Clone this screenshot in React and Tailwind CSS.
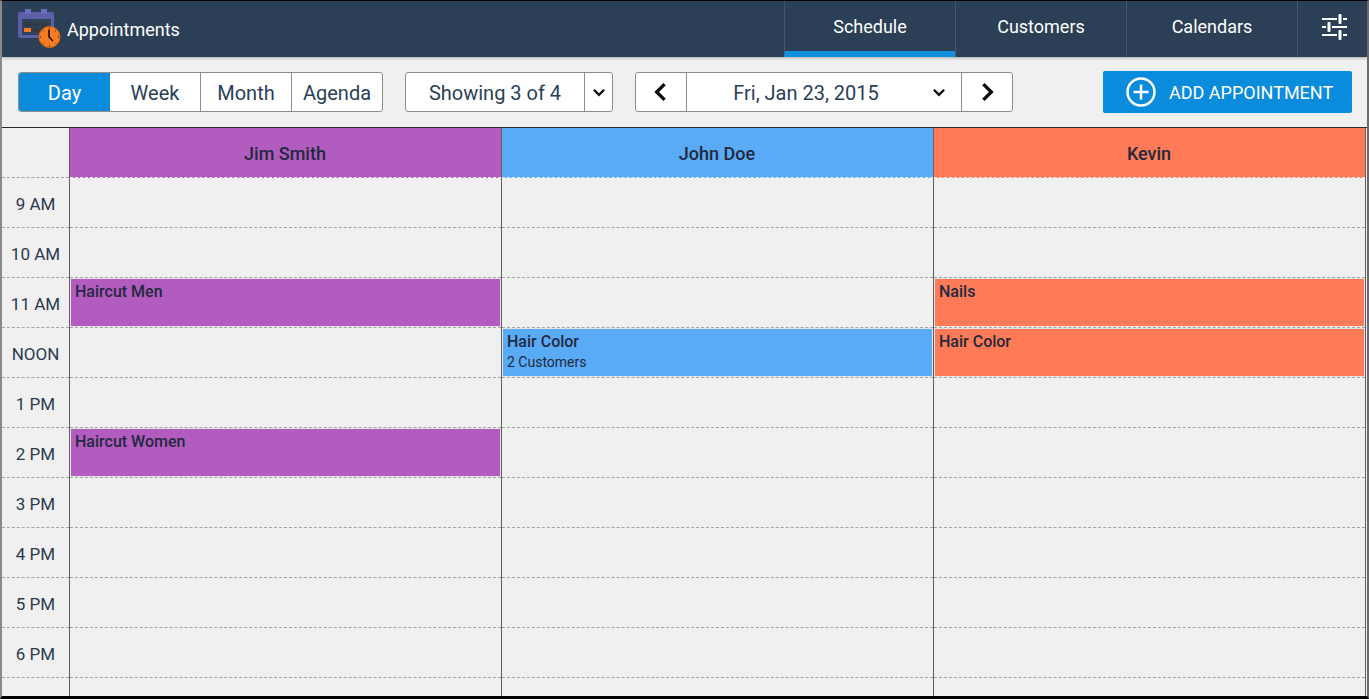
import React from 'react';

const hours = ['9 AM', '10 AM', '11 AM', 'NOON', '1 PM', '2 PM', '3 PM', '4 PM', '5 PM', '6 PM'];

const columns = [
  {
    name: 'Jim Smith',
    head: 'bg-[#b25cc0]',
    events: { '11 AM': { title: 'Haircut Men' }, '2 PM': { title: 'Haircut Women' } },
  },
  {
    name: 'John Doe',
    head: 'bg-[#5aabf6]',
    events: { NOON: { title: 'Hair Color', sub: '2 Customers' } },
  },
  {
    name: 'Kevin',
    head: 'bg-[#ff7b57]',
    events: { '11 AM': { title: 'Nails' }, NOON: { title: 'Hair Color' } },
  },
];

const Chevron = ({ dir = 'down', size = 16, width = 2 }) => {
  const d = { down: 'M2.500 5l4.500 4.500L11.500 5', left: 'M9.500 1.500L4 7l5.500 5.500', right: 'M4.500 1.500L10 7l-5.500 5.500' }[dir];
  return (
    <svg width={size} height={size} viewBox="0 0 14 14" fill="none" stroke="#0b0f14" strokeWidth={width}>
      <path d={d} />
    </svg>
  );
};

const Logo = () => (
  <svg width="46" height="40" viewBox="0 0 46 40">
    <rect x="1" y="3" width="36" height="26" rx="2" fill="#5a5fa8" />
    <rect x="8" y="0" width="6" height="5" fill="#6a70bd" />
    <rect x="24" y="0" width="6" height="5" fill="#6a70bd" />
    <rect x="5" y="10" width="29" height="16" fill="#2f4257" />
    <rect x="7" y="13" width="7" height="4" fill="#34383d" />
    <rect x="16" y="13" width="6" height="4" fill="#34383d" />
    <rect x="24" y="13" width="6" height="4" fill="#34383d" />
    <rect x="7" y="19" width="7" height="4" fill="#f57c20" />
    <rect x="16" y="19" width="6" height="4" fill="#34383d" />
    <rect x="24" y="19" width="6" height="4" fill="#34383d" />
    <circle cx="32.500" cy="28" r="10.500" fill="#f57c20" stroke="#d96a14" />
    <path d="M32 20.500v7.500l4 4" fill="none" stroke="#111" strokeWidth="1.600" />
    <path d="M32.500 18.500v1M32.500 36.500v1M23 28h1M41 28h1M26 21.500l.7.7M39 21.500l-.7.7M26 34.500l.7-.7M39 34.500l-.7-.7" stroke="#111" strokeWidth="1" />
  </svg>
);

const SlidersIcon = () => (
  <svg width="28" height="28" viewBox="0 0 28 28" fill="#fff">
    <rect x="2" y="5" width="25" height="2" />
    <rect x="2" y="13" width="25" height="2" />
    <rect x="2" y="21" width="25" height="2" />
    <rect x="17" y="1" width="6" height="10" rx="1.500" fill="#2b3f56" />
    <rect x="18.500" y="1" width="3" height="10" rx="1" />
    <rect x="6" y="9" width="6" height="10" rx="1.500" fill="#2b3f56" />
    <rect x="7.500" y="9" width="3" height="10" rx="1" />
    <rect x="17" y="17" width="6" height="10" rx="1.500" fill="#2b3f56" />
    <rect x="18.500" y="17" width="3" height="10" rx="1" />
  </svg>
);

const NavTab = ({ label, active, w }) => (
  <div className={`${w} h-full flex items-center justify-center border-l border-[#44586d] text-[18px] text-white ${active ? 'border-b-[6px] border-b-[#1191e0] pt-[1px]' : 'pb-[5px]'}`}>
    {label}
  </div>
);

const Cell = ({ event, color }) => (
  <div className="h-[50px] border-b border-dashed border-[#a3a3a3]">
    {event && (
      <div className={`h-full px-1 pt-[3px] border border-[#e4e4e4] text-[#22293d] ${color}`}>
        <div className="text-[16px] leading-[20px] font-medium">{event.title}</div>
        {event.sub && <div className="text-[14px] leading-[20px]">{event.sub}</div>}
      </div>
    )}
  </div>
);

export default function App() {
  return (
    <div className="w-[1369px] h-[699px] overflow-hidden flex flex-col bg-[#f0f0f0] border-t border-t-black border-l-2 border-l-[#8a8a8a] border-r-2 border-r-[#6a6a6a] border-b-[3px] border-b-black font-['Roboto',sans-serif]">
      {/* Nav */}
      <div className="h-[56px] shrink-0 flex items-center bg-[#2b3f56] shadow-[0_1px_3px_rgba(0,0,0,0.3)]">
        <div className="pl-[15px] flex items-center flex-1">
          <Logo />
          <span className="ml-[4px] text-[18px] text-white">Appointments</span>
        </div>
        <NavTab label="Schedule" active w="w-[171px]" />
        <NavTab label="Customers" w="w-[171px]" />
        <NavTab label="Calendars" w="w-[171px]" />
        <div className="w-[70px] h-full flex items-center justify-center border-l border-[#44586d] pb-[4px] pl-[2px]">
          <SlidersIcon />
        </div>
      </div>

      {/* Toolbar */}
      <div className="h-[70px] shrink-0 flex items-center pl-[16px] pb-px text-[20px] text-[#2b3f56]">
        <div className="flex h-[40px] w-[365px] rounded-[3px] border border-[#8e8e8e] bg-white overflow-hidden">
          <div className="w-[91px] flex items-center justify-center bg-[#0a8bdc] text-white pt-[3px]">Day</div>
          <div className="w-[91px] flex items-center justify-center border-r border-[#8e8e8e] pt-[3px]">Week</div>
          <div className="w-[91px] flex items-center justify-center border-r border-[#8e8e8e] pt-[3px]">Month</div>
          <div className="flex-1 flex items-center justify-center pt-[3px]">Agenda</div>
        </div>

        <div className="ml-[22px] flex h-[40px] w-[208px] rounded-[3px] border border-[#8e8e8e] bg-white overflow-hidden">
          <div className="flex-1 flex items-center justify-center border-r border-[#8e8e8e] pt-[3px]">Showing 3 of 4</div>
          <div className="w-[27px] flex items-center justify-center"><Chevron /></div>
        </div>

        <div className="ml-[22px] flex h-[40px] w-[378px] rounded-[3px] border border-[#8e8e8e] bg-white overflow-hidden">
          <div className="w-[51px] flex items-center justify-center border-r border-[#8e8e8e]">
            <Chevron dir="left" size={20} width={2.400} />
          </div>
          <div className="flex-1 relative flex items-center justify-center border-r border-[#8e8e8e] pr-[36px] pt-[3px]">
            Fri, Jan 23, 2015
            <span className="absolute right-[14px] top-[11px]"><Chevron /></span>
          </div>
          <div className="w-[50px] flex items-center justify-center">
            <Chevron dir="right" size={20} width={2.400} />
          </div>
        </div>

        <div className="ml-[90px] w-[249px] h-[42px] rounded-[2px] bg-[#0a8bdc] flex items-center pl-[23px] text-white text-[18px]">
          <svg width="30" height="30" viewBox="0 0 30 30" fill="none" stroke="#fff" strokeWidth="2.500">
            <circle cx="15" cy="15" r="13.500" />
            <path d="M15 7.500v15M7.500 15h15" />
          </svg>
          <span className="ml-[13px] pt-px">ADD APPOINTMENT</span>
        </div>
      </div>

      {/* Day grid */}
      <div className="flex-1 min-h-0 flex border-t border-t-[#2a2a2a]">
        <div className="w-[68px] shrink-0 border-r border-[#5f5f5f]">
          <div className="h-[50px] border-b border-dashed border-[#a3a3a3]" />
          {hours.map((h) => (
            <div key={h} className="h-[50px] flex items-center justify-center border-b border-dashed border-[#a3a3a3] pt-[5px] text-[17px] text-[#2b3a4e]">
              {h}
            </div>
          ))}
        </div>
        {columns.map((col) => (
          <div key={col.name} className="w-[432px] shrink-0 border-r border-[#5f5f5f]">
            <div className={`h-[50px] flex items-center justify-center border-b border-dashed border-[#e6e6e6] pt-px pr-px text-[18px] font-medium text-[#22293d] ${col.head}`}>
              {col.name}
            </div>
            {hours.map((h) => (
              <Cell key={h} event={col.events[h]} color={col.head} />
            ))}
          </div>
        ))}
      </div>
    </div>
  );
}
